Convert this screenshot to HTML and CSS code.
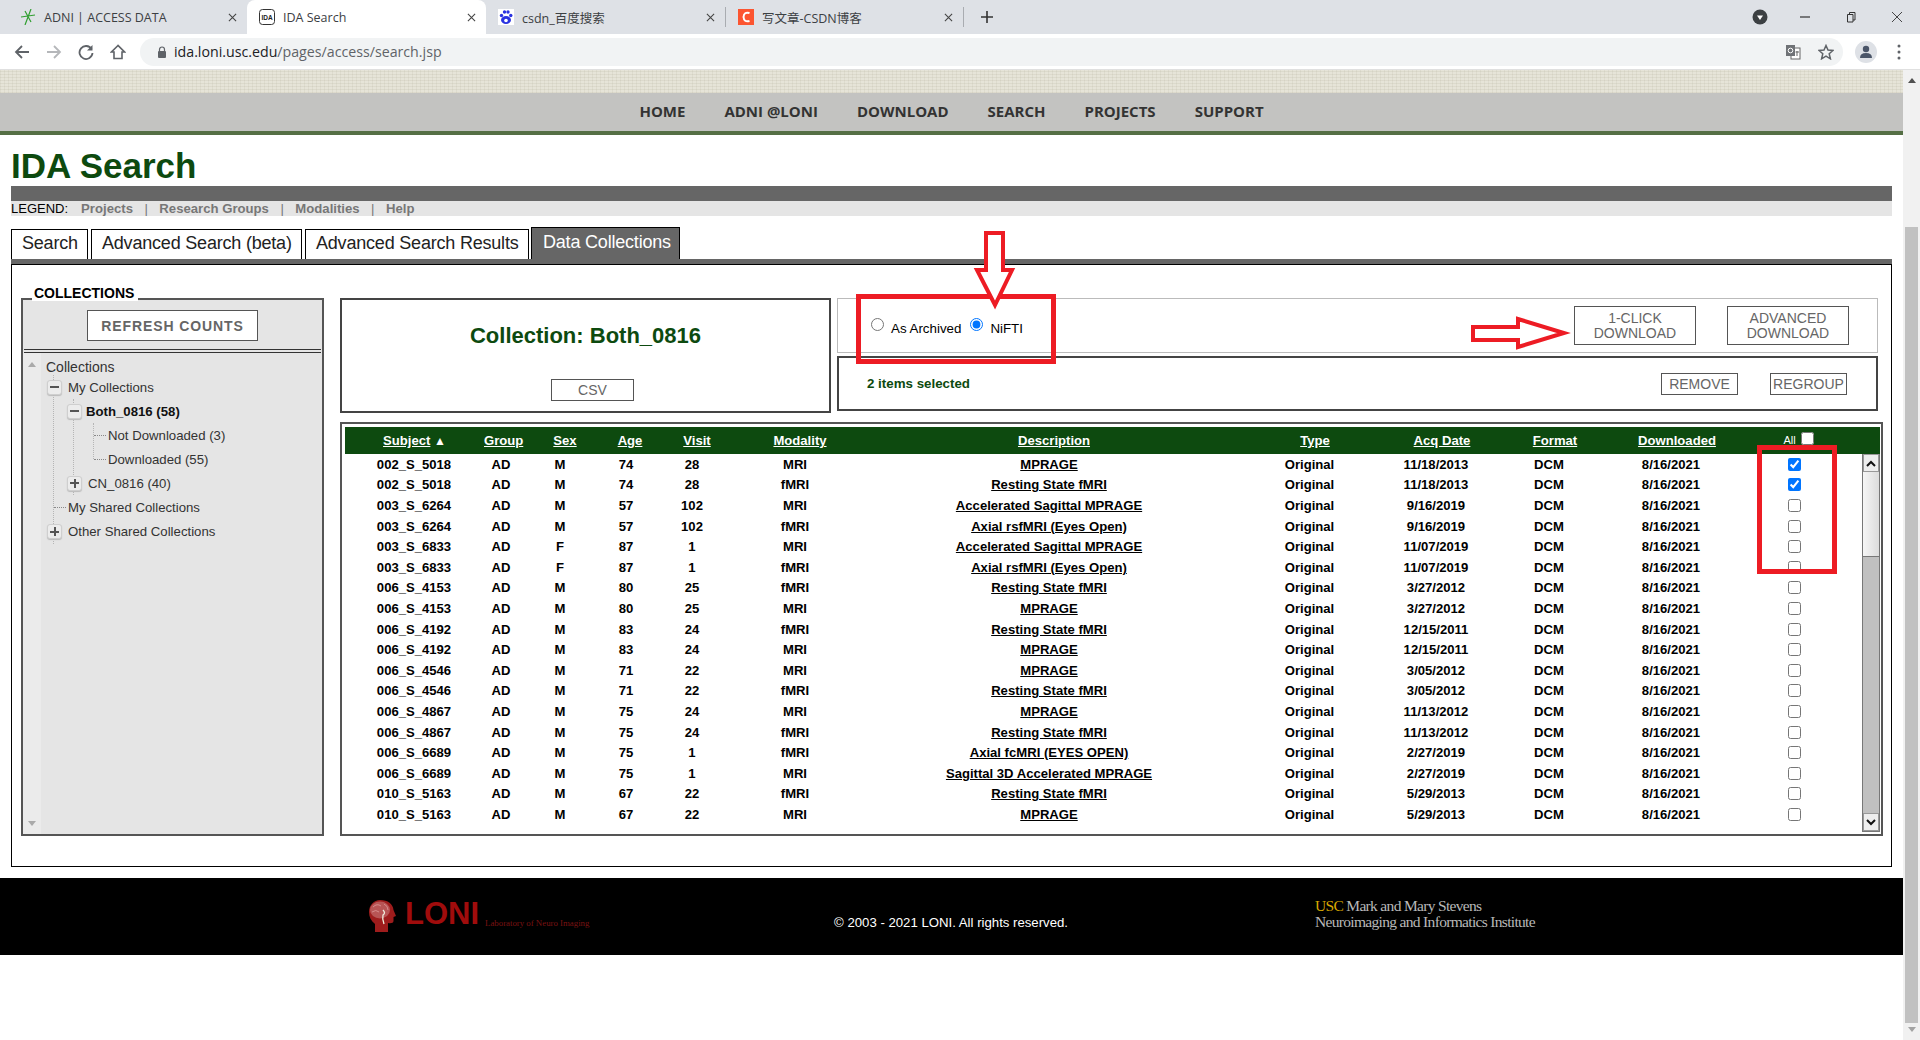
FILE: index.html
```html
<!DOCTYPE html>
<html lang="en">
<head>
  <meta charset="UTF-8">
  <meta name="viewport" content="width=device-width, initial-scale=1.0">
  <title>IDA Search</title>
  <link rel="stylesheet" href="styles.css">
</head>
<body>
<div class="window">

  <!-- browser tabs -->
  <div class="tabstrip">
    <div class="tab">
      <svg class="favicon" viewBox="0 0 16 16"><path d="M11 0 L5 16 M1 8 L15 6 M5 2 L11 13" stroke="#2f9e2f" stroke-width="1.2" fill="none"/></svg>
      <span class="tab-title">ADNI | ACCESS DATA</span>
      <svg class="tab-close" viewBox="0 0 10 10"><path d="M1 1 L9 9 M9 1 L1 9" stroke="#444" stroke-width="1.2"/></svg>
    </div>
    <div class="tab tab-active">
      <svg class="favicon" viewBox="0 0 16 16"><rect x="0.5" y="0.5" width="15" height="15" rx="3" fill="#fff" stroke="#333"/><text x="8" y="10.5" font-size="6.5" font-weight="700" text-anchor="middle" font-family="Liberation Sans" fill="#222">IDA</text></svg>
      <span class="tab-title">IDA Search</span>
      <svg class="tab-close" viewBox="0 0 10 10"><path d="M1 1 L9 9 M9 1 L1 9" stroke="#444" stroke-width="1.2"/></svg>
    </div>
    <div class="tab">
      <svg class="favicon" viewBox="0 0 16 16"><rect width="16" height="16" fill="#fff"/><ellipse cx="8" cy="11" rx="5" ry="4" fill="#2932e1"/><circle cx="3.5" cy="6.5" r="1.7" fill="#2932e1"/><circle cx="6.5" cy="3" r="1.7" fill="#2932e1"/><circle cx="10" cy="3" r="1.7" fill="#2932e1"/><circle cx="12.8" cy="6.5" r="1.7" fill="#2932e1"/><circle cx="8" cy="11.5" r="1.8" fill="#fff"/></svg>
      <span class="tab-title">csdn_百度搜索</span>
      <svg class="tab-close" viewBox="0 0 10 10"><path d="M1 1 L9 9 M9 1 L1 9" stroke="#444" stroke-width="1.2"/></svg>
    </div>
    <div class="tab tab-sep">
      <svg class="favicon" viewBox="0 0 16 16"><rect width="16" height="16" fill="#fc5531"/><path d="M11.5 4 Q6 2.5 5.5 8 Q6 13.5 11.5 12" stroke="#fff" stroke-width="2" fill="none"/></svg>
      <span class="tab-title">写文章-CSDN博客</span>
      <svg class="tab-close" viewBox="0 0 10 10"><path d="M1 1 L9 9 M9 1 L1 9" stroke="#444" stroke-width="1.2"/></svg>
    </div>
    <svg class="new-tab" viewBox="0 0 12 12"><path d="M6 0 V12 M0 6 H12" stroke="#333" stroke-width="1.6"/></svg>
    <div class="window-btns">
      <svg class="win-icon win-badge" viewBox="0 0 16 16"><circle cx="8" cy="8" r="7.5" fill="#3c4043"/><path d="M5 6.5 H11 L8 11 Z" fill="#fff"/></svg>
      <svg class="win-icon win-min" viewBox="0 0 12 12"><path d="M1 6 H11" stroke="#333" stroke-width="1.2"/></svg>
      <svg class="win-icon win-restore" viewBox="0 0 12 12"><path d="M2.5 3.5 H8 V11 H2.5 Z M4.5 3.5 V1.5 H10 V9 H8" stroke="#333" fill="none"/></svg>
      <svg class="win-icon win-close" viewBox="0 0 12 12"><path d="M1 1 L11 11 M11 1 L1 11" stroke="#333" stroke-width="0.9"/></svg>
    </div>
  </div>

  <!-- browser toolbar -->
  <div class="toolbar">
    <svg class="tool-icon" viewBox="0 0 16 16"><path d="M15 8 H2 M8 2 L2 8 L8 14" stroke="#5f6368" stroke-width="1.8" fill="none"/></svg>
    <svg class="tool-icon" viewBox="0 0 16 16"><path d="M1 8 H14 M8 2 L14 8 L8 14" stroke="#b5b7ba" stroke-width="1.8" fill="none"/></svg>
    <svg class="tool-icon" viewBox="0 0 16 16"><path d="M13.5 5 A6.5 6.5 0 1 0 14.5 9" stroke="#5f6368" stroke-width="1.8" fill="none"/><path d="M14.5 1 V6.5 H9 Z" fill="#5f6368"/></svg>
    <svg class="tool-icon" viewBox="0 0 16 16"><path d="M8 1.5 L1.5 8 H4 V14.5 H12 V8 H14.5 Z" stroke="#5f6368" stroke-width="1.6" fill="none"/></svg>
    <div class="omnibox">
      <svg class="lock" viewBox="0 0 10 12"><path d="M2.5 5 V3.5 A2.5 2.5 0 0 1 7.5 3.5 V5" stroke="#5f6368" stroke-width="1.2" fill="none"/><rect x="1" y="5" width="8" height="7" rx="1" fill="#5f6368"/></svg>
      <span class="url"><span class="url-host">ida.loni.usc.edu</span>/pages/access/search.jsp</span>
      <svg class="omni-icon" viewBox="0 0 16 16"><rect x="6" y="4" width="9" height="11" fill="#fff" stroke="#666"/><rect x="1" y="1" width="9" height="11" fill="#6f7276"/><circle cx="5.5" cy="6.5" r="2.3" stroke="#fff" stroke-width="1" fill="none"/><path d="M10.5 8 H14 M12 7 V12" stroke="#666"/></svg>
      <svg class="omni-icon" viewBox="0 0 16 16"><path d="M8 1.5 L10 6 L15 6.5 L11.2 9.8 L12.4 14.8 L8 12.2 L3.6 14.8 L4.8 9.8 L1 6.5 L6 6 Z" stroke="#5f6368" stroke-width="1.5" fill="none"/></svg>
    </div>
    <svg class="avatar" viewBox="0 0 22 22"><circle cx="11" cy="11" r="11" fill="#dee1e6"/><circle cx="11" cy="8" r="3.2" fill="#4a5568"/><path d="M5 17 Q5 12 11 12 Q17 12 17 17 Z" fill="#4a5568"/></svg>
    <svg class="menu-dots" viewBox="0 0 4 16"><circle cx="2" cy="2" r="1.5" fill="#5f6368"/><circle cx="2" cy="8" r="1.5" fill="#5f6368"/><circle cx="2" cy="14" r="1.5" fill="#5f6368"/></svg>
  </div>

  <div class="viewport">
    <div class="page">
      <div class="texture"></div>
      <nav class="site-nav">
        <a>HOME</a><a>ADNI @LONI</a><a>DOWNLOAD</a><a>SEARCH</a><a>PROJECTS</a><a>SUPPORT</a>
      </nav>

      <div class="wrap">
        <h1>IDA Search</h1>
        <div class="dark-bar"></div>
        <div class="legend-bar">
          <span class="legend-label">LEGEND:</span>
          <a>Projects</a><i>|</i><a>Research Groups</a><i>|</i><a>Modalities</a><i>|</i><a>Help</a>
        </div>

        <div class="page-tabs">
          <a class="page-tab tab-w1">Search</a>
          <a class="page-tab tab-w2">Advanced Search (beta)</a>
          <a class="page-tab tab-w3">Advanced Search Results</a>
          <a class="page-tab tab-w4 page-tab-on">Data Collections</a>
        </div>
        <div class="tab-rule"></div>

        <div class="content">
          <aside class="collections">
            <div class="collections-title">COLLECTIONS</div>
            <div class="refresh-row"><button class="btn btn-refresh">REFRESH COUNTS</button></div>
            <div class="tree-area">
              <div class="tree-scroll">
                <svg class="tree-arrow" viewBox="0 0 8 5"><path d="M4 0 L8 5 H0 Z" fill="#aaa"/></svg>
                <svg class="tree-arrow" viewBox="0 0 8 5"><path d="M0 0 H8 L4 5 Z" fill="#aaa"/></svg>
              </div>
              <div class="tree">
                <div class="tree-root">Collections</div>
                <ul class="tree-list tree-top">
                  <li>
                    <div class="node"><span class="toggle"></span>My Collections</div>
                    <ul class="tree-list tree-sub">
                      <li>
                        <div class="node node-bold"><span class="toggle"></span>Both_0816 (58)</div>
                        <ul class="tree-list tree-sub tree-leaves">
                          <li><div class="node leaf">Not Downloaded (3)</div></li>
                          <li><div class="node leaf">Downloaded (55)</div></li>
                        </ul>
                      </li>
                      <li><div class="node"><span class="toggle toggle-plus"></span>CN_0816 (40)</div></li>
                    </ul>
                  </li>
                  <li><div class="node leaf">My Shared Collections</div></li>
                  <li><div class="node"><span class="toggle toggle-plus"></span>Other Shared Collections</div></li>
                </ul>
              </div>
            </div>
          </aside>

          <main class="main-col">
            <div class="top-row">
              <section class="collection-box">
                <h2>Collection: Both_0816</h2>
                <button class="btn btn-csv">CSV</button>
              </section>
              <div class="action-col">
                <div class="download-box">
                  <label class="radio-label"><input type="radio" name="fmt">As Archived</label>
                  <label class="radio-label"><input type="radio" name="fmt" checked>NiFTI</label>
                  <button class="btn btn-dl btn-dl-first">1-CLICK<br>DOWNLOAD</button>
                  <button class="btn btn-dl">ADVANCED<br>DOWNLOAD</button>
                </div>
                <div class="selected-box">
                  <span class="selected-count">2 items selected</span>
                  <button class="btn btn-small btn-remove">REMOVE</button>
                  <button class="btn btn-small btn-regroup">REGROUP</button>
                </div>
              </div>
            </div>

            <div class="results">
              <table class="results-head">
                <colgroup>
                  <col class="h1"><col class="h2"><col class="h3"><col class="h4"><col class="h5"><col class="h6"><col class="h7"><col class="h8"><col class="h9"><col class="h10"><col class="h11"><col class="h12">
                </colgroup>
                <tr>
                  <th><a>Subject</a> <span class="sort">▲</span></th><th><a>Group</a></th><th><a>Sex</a></th><th><a>Age</a></th><th><a>Visit</a></th><th><a>Modality</a></th><th><a>Description</a></th><th><a>Type</a></th><th><a>Acq Date</a></th><th><a>Format</a></th><th><a>Downloaded</a></th>
                  <th class="th-all"><span class="all-label">All</span><input type="checkbox" class="all-check"></th>
                </tr>
              </table>
              <div class="results-body">
                <table class="results-rows">
                  <colgroup>
                    <col class="b1"><col class="b2"><col class="b3"><col class="b4"><col class="b5"><col class="b6"><col class="b7"><col class="b8"><col class="b9"><col class="b10"><col class="b11"><col class="b12">
                  </colgroup>
                  <tr><td>002_S_5018</td><td>AD</td><td>M</td><td>74</td><td>28</td><td>MRI</td><td><a>MPRAGE</a></td><td>Original</td><td>11/18/2013</td><td>DCM</td><td>8/16/2021</td><td class="td-check"><input type="checkbox" checked></td></tr>
                  <tr><td>002_S_5018</td><td>AD</td><td>M</td><td>74</td><td>28</td><td>fMRI</td><td><a>Resting State fMRI</a></td><td>Original</td><td>11/18/2013</td><td>DCM</td><td>8/16/2021</td><td class="td-check"><input type="checkbox" checked></td></tr>
                  <tr><td>003_S_6264</td><td>AD</td><td>M</td><td>57</td><td>102</td><td>MRI</td><td><a>Accelerated Sagittal MPRAGE</a></td><td>Original</td><td>9/16/2019</td><td>DCM</td><td>8/16/2021</td><td class="td-check"><input type="checkbox"></td></tr>
                  <tr><td>003_S_6264</td><td>AD</td><td>M</td><td>57</td><td>102</td><td>fMRI</td><td><a>Axial rsfMRI (Eyes Open)</a></td><td>Original</td><td>9/16/2019</td><td>DCM</td><td>8/16/2021</td><td class="td-check"><input type="checkbox"></td></tr>
                  <tr><td>003_S_6833</td><td>AD</td><td>F</td><td>87</td><td>1</td><td>MRI</td><td><a>Accelerated Sagittal MPRAGE</a></td><td>Original</td><td>11/07/2019</td><td>DCM</td><td>8/16/2021</td><td class="td-check"><input type="checkbox"></td></tr>
                  <tr><td>003_S_6833</td><td>AD</td><td>F</td><td>87</td><td>1</td><td>fMRI</td><td><a>Axial rsfMRI (Eyes Open)</a></td><td>Original</td><td>11/07/2019</td><td>DCM</td><td>8/16/2021</td><td class="td-check"><input type="checkbox"></td></tr>
                  <tr><td>006_S_4153</td><td>AD</td><td>M</td><td>80</td><td>25</td><td>fMRI</td><td><a>Resting State fMRI</a></td><td>Original</td><td>3/27/2012</td><td>DCM</td><td>8/16/2021</td><td class="td-check"><input type="checkbox"></td></tr>
                  <tr><td>006_S_4153</td><td>AD</td><td>M</td><td>80</td><td>25</td><td>MRI</td><td><a>MPRAGE</a></td><td>Original</td><td>3/27/2012</td><td>DCM</td><td>8/16/2021</td><td class="td-check"><input type="checkbox"></td></tr>
                  <tr><td>006_S_4192</td><td>AD</td><td>M</td><td>83</td><td>24</td><td>fMRI</td><td><a>Resting State fMRI</a></td><td>Original</td><td>12/15/2011</td><td>DCM</td><td>8/16/2021</td><td class="td-check"><input type="checkbox"></td></tr>
                  <tr><td>006_S_4192</td><td>AD</td><td>M</td><td>83</td><td>24</td><td>MRI</td><td><a>MPRAGE</a></td><td>Original</td><td>12/15/2011</td><td>DCM</td><td>8/16/2021</td><td class="td-check"><input type="checkbox"></td></tr>
                  <tr><td>006_S_4546</td><td>AD</td><td>M</td><td>71</td><td>22</td><td>MRI</td><td><a>MPRAGE</a></td><td>Original</td><td>3/05/2012</td><td>DCM</td><td>8/16/2021</td><td class="td-check"><input type="checkbox"></td></tr>
                  <tr><td>006_S_4546</td><td>AD</td><td>M</td><td>71</td><td>22</td><td>fMRI</td><td><a>Resting State fMRI</a></td><td>Original</td><td>3/05/2012</td><td>DCM</td><td>8/16/2021</td><td class="td-check"><input type="checkbox"></td></tr>
                  <tr><td>006_S_4867</td><td>AD</td><td>M</td><td>75</td><td>24</td><td>MRI</td><td><a>MPRAGE</a></td><td>Original</td><td>11/13/2012</td><td>DCM</td><td>8/16/2021</td><td class="td-check"><input type="checkbox"></td></tr>
                  <tr><td>006_S_4867</td><td>AD</td><td>M</td><td>75</td><td>24</td><td>fMRI</td><td><a>Resting State fMRI</a></td><td>Original</td><td>11/13/2012</td><td>DCM</td><td>8/16/2021</td><td class="td-check"><input type="checkbox"></td></tr>
                  <tr><td>006_S_6689</td><td>AD</td><td>M</td><td>75</td><td>1</td><td>fMRI</td><td><a>Axial fcMRI (EYES OPEN)</a></td><td>Original</td><td>2/27/2019</td><td>DCM</td><td>8/16/2021</td><td class="td-check"><input type="checkbox"></td></tr>
                  <tr><td>006_S_6689</td><td>AD</td><td>M</td><td>75</td><td>1</td><td>MRI</td><td><a>Sagittal 3D Accelerated MPRAGE</a></td><td>Original</td><td>2/27/2019</td><td>DCM</td><td>8/16/2021</td><td class="td-check"><input type="checkbox"></td></tr>
                  <tr><td>010_S_5163</td><td>AD</td><td>M</td><td>67</td><td>22</td><td>fMRI</td><td><a>Resting State fMRI</a></td><td>Original</td><td>5/29/2013</td><td>DCM</td><td>8/16/2021</td><td class="td-check"><input type="checkbox"></td></tr>
                  <tr><td>010_S_5163</td><td>AD</td><td>M</td><td>67</td><td>22</td><td>MRI</td><td><a>MPRAGE</a></td><td>Original</td><td>5/29/2013</td><td>DCM</td><td>8/16/2021</td><td class="td-check"><input type="checkbox"></td></tr>
                </table>
                <div class="rows-scroll">
                  <div class="sb-btn"><svg viewBox="0 0 10 7"><path d="M1 6 L5 2 L9 6" stroke="#111" stroke-width="2" fill="none"/></svg></div>
                  <div class="sb-thumb"></div>
                  <div class="sb-track"></div>
                  <div class="sb-btn"><svg viewBox="0 0 10 7"><path d="M1 1 L5 5 L9 1" stroke="#111" stroke-width="2" fill="none"/></svg></div>
                </div>
              </div>
            </div>
          </main>
        </div>
      </div>

      <footer class="site-footer">
        <div class="loni-logo">
          <svg class="loni-head" viewBox="0 0 27 32">
            <path d="M11 0 C19 0 24 4 24.5 10 L27 16 L24.5 17 V21 C24.5 23 22 23.5 19 23 V32 H6 V24 C2 21 0 17 0 12 C0 5 5 0 11 0 Z" fill="#9e1c1c"/>
            <ellipse cx="11" cy="10" rx="10" ry="8.5" fill="#b85555"/>
            <path d="M4 7 Q8 3 12 6 M3 12 Q7 9 10 12 M15 4 Q19 6 19 10" stroke="#d99" stroke-width="0.8" fill="none"/>
            <path d="M14 10 Q17 13 14 15 Q13 19 15 24" stroke="#eed" stroke-width="1.3" fill="none"/>
          </svg>
          <span class="loni-word">LONI</span>
          <span class="loni-sub">Laboratory of Neuro Imaging</span>
        </div>
        <div class="copyright">© 2003 - 2021 LONI. All rights reserved.</div>
        <div class="usc-logo"><span class="usc-gold">USC</span> Mark and Mary Stevens<br>Neuroimaging and Informatics Institute</div>
      </footer>
    </div>

    <div class="page-scroll">
      <svg class="page-arrow" viewBox="0 0 8 5"><path d="M4 0 L8 5 H0 Z" fill="#505050"/></svg>
      <div class="page-thumb"></div>
      <svg class="page-arrow" viewBox="0 0 8 5"><path d="M0 0 H8 L4 5 Z" fill="#a3a3a3"/></svg>
    </div>
  </div>

  <!-- red marks someone drew on top of the screenshot -->
  <svg class="marks" viewBox="0 0 1920 1040">
    <rect x="858.5" y="296.5" width="195" height="65" class="mark-box"/>
    <rect x="1759.5" y="447.5" width="75" height="124" class="mark-box"/>
    <path d="M986 233 H1003 V270 H1012 L995 305 L977 270 H986 Z" class="mark-arrow"/>
    <path d="M1473 327 H1518 V319 L1564 333 L1518 347 V340 H1473 Z" class="mark-arrow"/>
  </svg>
</div>
</body>
</html>
```

FILE: styles.css
```css
* {
  box-sizing: border-box;
}

html, body {
  margin: 0;
  height: 100%;
  overflow: hidden;
  background: #fff;
}

body {
  font-family: "Liberation Sans", Arial, sans-serif;
  color: #000;
}

.window {
  position: relative;
  width: 1920px;
  height: 1040px;
  display: flex;
  flex-direction: column;
}

/* browser tabs */
.tabstrip {
  height: 34px;
  background: #dee1e6;
  display: flex;
  align-items: center;
  padding-left: 8px;
  font-family: "Open Sans", "Noto Sans CJK SC", sans-serif;
}

.tab {
  width: 239px;
  height: 34px;
  display: flex;
  align-items: center;
  padding: 0 10px 0 12px;
  font-size: 12.5px;
  color: #3c4043;
}

.tab-active {
  background: #fff;
  border-radius: 8px 8px 0 0;
}

.tab-sep {
  position: relative;
  border-left: 1px solid #a9acb1;
  border-right: 1px solid #a9acb1;
  height: 20px;
}

.favicon {
  width: 16px;
  height: 16px;
  flex: none;
  margin-right: 8px;
}

.tab-title {
  flex: 1;
  white-space: nowrap;
  font-family: "Open Sans", "Noto Sans CJK SC", sans-serif;
}

.tab-close {
  width: 9px;
  height: 9px;
  flex: none;
}

.new-tab {
  width: 12px;
  height: 12px;
  margin-left: 17px;
}

.window-btns {
  margin-left: auto;
  display: flex;
  align-items: center;
  height: 34px;
}

.win-icon {
  width: 12px;
  height: 12px;
}

.win-badge {
  width: 16px;
  height: 16px;
  margin-right: 31px;
}

.win-min {
  margin-right: 34px;
}

.win-restore {
  margin-right: 34px;
}

.win-close {
  margin-right: 17px;
}

/* browser toolbar */
.toolbar {
  height: 36px;
  background: #fff;
  display: flex;
  align-items: center;
  padding: 0 0 0 14px;
  border-bottom: 1px solid #e0e0e0;
}

.tool-icon {
  width: 16px;
  height: 16px;
  margin-right: 16px;
  flex: none;
}

.omnibox {
  width: 1703px;
  height: 28px;
  margin-left: -2px;
  background: #f1f3f4;
  border-radius: 15px;
  display: flex;
  align-items: center;
  padding: 0 9px 0 17px;
}

.lock {
  width: 10px;
  height: 12px;
  margin-right: 7px;
}

.url {
  flex: 1;
  font-family: "Open Sans", sans-serif;
  font-size: 14.2px;
  color: #5f6368;
}

.url-host {
  color: #202124;
}

.omni-icon {
  width: 16px;
  height: 16px;
  margin-left: 17px;
}

.avatar {
  width: 22px;
  height: 22px;
  margin-left: 12px;
}

.menu-dots {
  width: 4px;
  height: 16px;
  margin-left: 20px;
}

/* page */
.viewport {
  flex: 1;
  display: flex;
  min-height: 0;
}

.page {
  width: 1903px;
  flex: none;
}

.texture {
  height: 23px;
  background-color: #e6e4d8;
  background-image:
    repeating-linear-gradient(90deg, rgba(150, 145, 120, 0.10) 0 1px, transparent 1px 4px),
    repeating-linear-gradient(0deg, rgba(150, 145, 120, 0.12) 0 1px, transparent 1px 3px);
}

.site-nav {
  height: 42px;
  background: #c3c3c1;
  border-bottom: 4px solid #556f45;
  display: flex;
  justify-content: center;
  align-items: center;
  gap: 39px;
  padding-bottom: 2px;
  font-family: "Open Sans", sans-serif;
  font-weight: 700;
  font-size: 15px;
  color: #333;
}

.wrap {
  padding: 0 11px;
}

h1 {
  margin: 0;
  height: 51px;
  padding-top: 11px;
  font-size: 35px;
  line-height: 40px;
  font-weight: 700;
  color: #0d4a0f;
}

.dark-bar {
  height: 15px;
  background: #666;
}

.legend-bar {
  height: 15px;
  background: #e5e5e5;
  display: flex;
  align-items: center;
  font-size: 13.15px;
  font-weight: 700;
  color: #777;
}

.legend-label {
  font-weight: 400;
  font-size: 13px;
  color: #000;
  margin-right: 13px;
}

.legend-bar i {
  font-style: normal;
  font-weight: 400;
  margin: 0 11.5px;
}

.page-tabs {
  display: flex;
  align-items: flex-end;
  margin-top: 13px;
  height: 30px;
  gap: 3px;
}

.page-tab {
  height: 30px;
  padding-left: 10px;
  border: 1px solid #000;
  border-bottom: 0;
  background: #fff;
  font-size: 18px;
  line-height: 26px;
  white-space: nowrap;
  letter-spacing: -0.2px;
  color: #222;
}

.tab-w1 { width: 77px; }
.tab-w2 { width: 211px; }
.tab-w3 { width: 224px; }
.tab-w4 { width: 149px; margin-left: -1px; }

.page-tab-on {
  height: 32px;
  padding-left: 11px;
  background: #666;
  color: #fff;
  line-height: 28px;
}

.tab-rule {
  height: 5px;
  background: #666;
}

.content {
  display: flex;
  gap: 16px;
  height: 603px;
  padding: 33px 8px 0 9px;
  border: 1px solid #000;
}

/* collections panel */
.collections {
  position: relative;
  width: 303px;
  height: 538px;
  background: #e5e5e5;
  border: 2px solid #555;
  display: flex;
  flex-direction: column;
}

.collections-title {
  position: absolute;
  left: 9px;
  top: -15px;
  padding: 0 4px 0 2px;
  background: #fff;
  font-size: 14px;
  line-height: 16px;
  font-weight: 700;
}

.btn {
  background: #fff;
  border: 1px solid #555;
  color: #666;
  font-family: "Liberation Sans", Arial, sans-serif;
  font-size: 14px;
  padding: 0;
}

.refresh-row {
  height: 53px;
  padding-top: 10px;
  display: flex;
  justify-content: center;
  border-bottom: 4px double #333;
  margin: 0 1px;
}

.btn-refresh {
  width: 171px;
  height: 31px;
  font-weight: 700;
  letter-spacing: 0.9px;
}

.tree-area {
  flex: 1;
  display: flex;
  min-height: 0;
}

.tree-scroll {
  width: 18px;
  background: #ebebeb;
  display: flex;
  flex-direction: column;
  justify-content: space-between;
  align-items: center;
  padding: 9px 0 8px;
  flex: none;
}

.tree-arrow {
  width: 8px;
  height: 5px;
}

.tree {
  flex: 1;
  font-size: 13.2px;
  color: #333;
}

.tree-root {
  height: 18px;
  padding-left: 5px;
  margin-top: 4px;
  line-height: 20px;
  font-size: 14px;
}

.tree-list {
  list-style: none;
  margin: 0;
  padding: 0;
}

.tree-top {
  margin-left: 12px;
  border-left: 1px dotted #b5b5b5;
}

.tree-sub {
  margin-left: 19px;
  border-left: 1px dotted #b5b5b5;
}

/* the dotted line stops at the middle of the last leaf */
.tree-leaves {
  height: 36px;
  margin-bottom: 12.2px;
}

.node {
  display: flex;
  align-items: center;
  height: 24.1px;
  white-space: nowrap;
}

.node-bold {
  font-weight: 700;
  color: #111;
}

.node-bold .toggle {
  margin-right: 4px;
}

.toggle {
  width: 15px;
  height: 15px;
  margin-left: -7px;
  margin-right: 6px;
  background: linear-gradient(#555, #555) center / 9px 2px no-repeat, #ececec;
  border: 1px solid #cfcfcf;
  border-radius: 3px;
  box-shadow: 0 1px 1px #bbb;
  flex: none;
}

.toggle-plus {
  background:
    linear-gradient(#555, #555) center / 9px 2px no-repeat,
    linear-gradient(#555, #555) center / 2px 9px no-repeat,
    #ececec;
}

.leaf::before {
  content: "";
  width: 12px;
  margin-right: 2px;
  border-top: 1px dotted #888;
  flex: none;
}

.main-col {
  flex: 1;
  min-width: 0;
}

.top-row {
  display: flex;
  gap: 6px;
  height: 124px;
}

.collection-box {
  width: 491px;
  height: 115px;
  border: 2px solid #444;
  text-align: center;
}

.collection-box h2 {
  margin: 0;
  padding-top: 23px;
  height: 79px;
  font-size: 22px;
  line-height: 26px;
  font-weight: 700;
  color: #0d4a0f;
}

.btn-csv {
  display: block;
  width: 83px;
  height: 22px;
  margin: 0 0 0 209px;
  line-height: 20px;
}

.action-col {
  width: 1041px;
  display: flex;
  flex-direction: column;
  gap: 3px;
}

.download-box {
  height: 55px;
  border: 1px solid #bbb;
  display: flex;
  align-items: center;
  padding-left: 33px;
}

.radio-label {
  display: flex;
  align-items: center;
  padding-top: 6px;
  font-size: 13.33px;
  margin-right: 9px;
  white-space: nowrap;
}

.radio-label input {
  width: 13px;
  height: 13px;
  margin: 0 7px 9px 0;
}

.btn-dl {
  width: 122px;
  height: 39px;
  line-height: 15px;
  margin-left: 31px;
}

.btn-dl-first {
  margin-left: 542px;
}

.selected-box {
  height: 55px;
  border: 2px solid #444;
  display: flex;
  align-items: center;
  padding-left: 28px;
}

.selected-count {
  font-size: 13.33px;
  font-weight: 700;
  color: #0d4a0f;
}

.btn-small {
  height: 22px;
  width: 77px;
}

.btn-remove {
  margin-left: auto;
}

.btn-regroup {
  margin-left: 32px;
  margin-right: 29px;
}

/* results table */
.results {
  width: 1543px;
  height: 414px;
  border: 2px solid #555;
  padding: 3px 1px 0 3px;
}

.results table {
  border-collapse: collapse;
  table-layout: fixed;
  font-size: 13.1px;
  font-weight: 700;
}

.results-head {
  width: 1535px;
  height: 27px;
  background: #0d4a0f;
  color: #fff;
}

.results-head th {
  padding: 0;
  text-align: center;
}

.results-head a,
.results-rows a {
  text-decoration: underline;
}

.sort {
  font-size: 12px;
}

.th-all {
  padding-right: 33px !important;
}

.all-label {
  font-size: 11px;
  font-weight: 400;
}

.all-check {
  width: 13px;
  height: 13px;
  margin: 0 0 4px 5px;
  vertical-align: middle;
}

.h1 { width: 139px; }
.h2 { width: 36px; }
.h3 { width: 90px; }
.h4 { width: 40px; }
.h5 { width: 94px; }
.h6 { width: 112px; }
.h7 { width: 396px; }
.h8 { width: 126px; }
.h9 { width: 128px; }
.h10 { width: 98px; }
.h11 { width: 146px; }
.h12 { width: 130px; }

.results-body {
  display: flex;
  height: 378px;
}

.results-rows {
  width: 1517px;
  align-self: flex-start;
}

.results-rows td {
  height: 20.6px;
  padding: 0;
  text-align: center;
  line-height: 15px;
  white-space: nowrap;
}

.td-check {
  padding-right: 11px !important;
}

.td-check input {
  display: block;
  width: 13px;
  height: 13px;
  margin: 0 auto;
}

.b1 { width: 138px; }
.b2 { width: 36px; }
.b3 { width: 82px; }
.b4 { width: 50px; }
.b5 { width: 82px; }
.b6 { width: 124px; }
.b7 { width: 384px; }
.b8 { width: 137px; }
.b9 { width: 116px; }
.b10 { width: 110px; }
.b11 { width: 134px; }
.b12 { width: 124px; }

.rows-scroll {
  width: 18px;
  flex: none;
  display: flex;
  flex-direction: column;
  border: 1px solid #777;
  border-top: 0;
  background: #c0c0c0;
}

.sb-btn {
  height: 18px;
  background: #eee;
  border: 1px solid #999;
  display: flex;
  align-items: center;
  justify-content: center;
  flex: none;
}

.sb-btn svg {
  width: 10px;
  height: 7px;
}

.sb-thumb {
  height: 85px;
  background: linear-gradient(90deg, #f6f6f6, #dcdcdc);
  border-bottom: 1px solid #777;
  flex: none;
}

.sb-track {
  flex: 1;
}

/* footer */
.site-footer {
  margin-top: 11px;
  height: 77px;
  background: #000;
  display: flex;
}

.loni-logo {
  width: 465px;
  margin-left: 369px;
  display: flex;
  align-items: flex-start;
  padding-top: 22px;
}

.loni-head {
  width: 27px;
  height: 32px;
  flex: none;
}

.loni-word {
  margin: 3px 0 0 9px;
  font-weight: 700;
  font-size: 31px;
  line-height: 22px;
  color: #a00c0c;
}

.loni-sub {
  margin: 17px 0 0 6px;
  font-family: "Liberation Serif", serif;
  font-size: 8.8px;
  line-height: 12px;
  color: #7a1212;
  white-space: nowrap;
}

.copyright {
  width: 481px;
  padding-top: 37px;
  font-size: 13.2px;
  line-height: 16px;
  color: #fff;
}

.usc-logo {
  padding-top: 20px;
  font-family: "Liberation Serif", serif;
  font-size: 15.5px;
  line-height: 16px;
  letter-spacing: -0.68px;
  color: #b8b8b8;
}

.usc-gold {
  color: #d8a800;
}

.page-scroll {
  width: 17px;
  background: #f1f1f1;
  display: flex;
  flex-direction: column;
  align-items: center;
  padding: 8px 0;
}

.page-arrow {
  width: 8px;
  height: 5px;
  flex: none;
}

.page-thumb {
  width: 13px;
  height: 796px;
  margin: auto 0 4px;
  background: #c1c1c1;
}

/* annotations */
.marks {
  position: absolute;
  left: 0;
  top: 0;
  width: 1920px;
  height: 1040px;
  pointer-events: none;
}

.mark-box {
  fill: none;
  stroke: #ed1c24;
  stroke-width: 5;
}

.mark-arrow {
  fill: #fff;
  stroke: #ed1c24;
  stroke-width: 4;
}
```
